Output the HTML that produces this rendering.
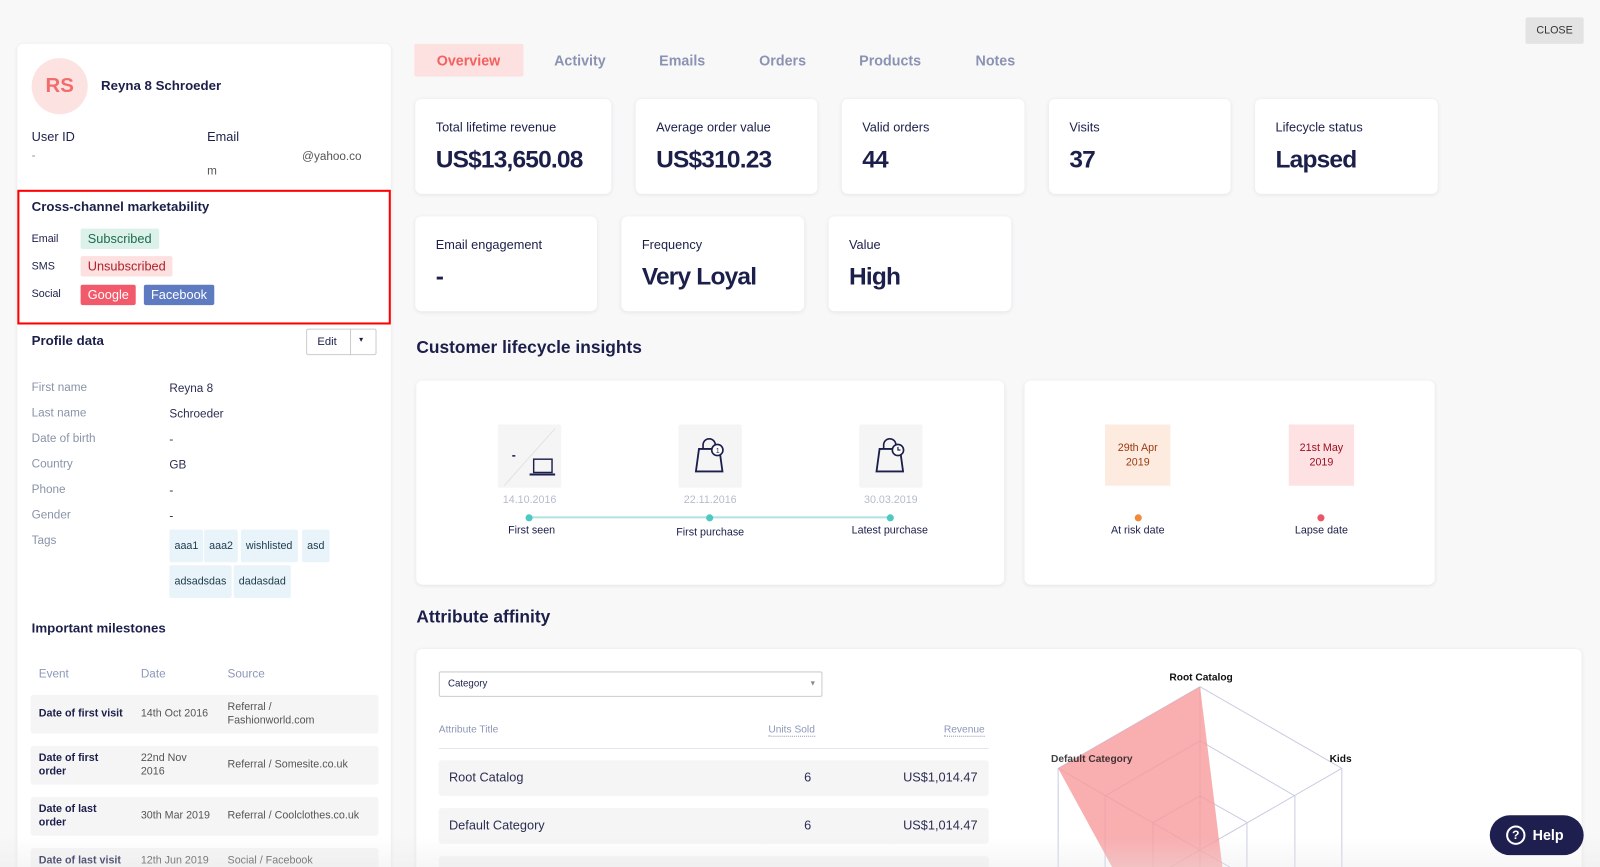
<!DOCTYPE html>
<html><head><meta charset="utf-8"><style>
*{box-sizing:border-box;margin:0;padding:0}
html,body{width:1600px;height:867px;overflow:hidden;background:#f8f8f9;font-family:"Liberation Sans",sans-serif;color:#1b1f4a}
#w{position:absolute;left:0;top:0;width:1568px;height:850px;overflow:hidden;transform:scale(1.0204);transform-origin:0 0}
.a{position:absolute}
.card{position:absolute;background:#fff;border-radius:6px;box-shadow:0 1px 4px rgba(0,0,0,.08)}
.lbl{font-size:12.5px;color:#1b1f4a}
.big{font-size:24px;font-weight:bold;color:#1b1f4a;letter-spacing:-.8px}
.tab{position:absolute;top:43px;height:32px;line-height:32px;font-size:14px;font-weight:bold;color:#8b93b3}
.k{font-size:11.5px;color:#8993a8}
.v{font-size:11.5px;color:#2b2e52}
.tag{position:absolute;height:32px;line-height:32px;padding:0 5px;background:#e9f4fa;border-radius:2px;font-size:10.5px;color:#1b3a4a}
.mrow{position:absolute;left:30px;width:341px;background:#f5f5f6;border-radius:3px;font-size:10.5px}
.pill{position:absolute;height:20px;line-height:20px;padding:0 7px;border-radius:2px;font-size:12.5px}
.sq{position:absolute;width:62px;height:62px;background:#f5f5f6;border-radius:2px}
.dot{position:absolute;width:7px;height:7px;border-radius:50%}
.sm{position:absolute;font-size:10.5px;color:#1b1f4a;text-align:center;width:110px}
.dt{position:absolute;font-size:10.5px;color:#b6bccd;text-align:center;width:110px}
.arow{position:absolute;left:430px;width:539px;height:35px;background:#f5f5f6;border-radius:3px;font-size:12.5px;line-height:35px;color:#2b2e52}
</style></head><body><div id="w">
<div class="a" style="left:1495px;top:17px;width:57px;height:26px;background:#e3e3e3;border-radius:2px;font-size:10.5px;line-height:26px;text-align:center;color:#333">CLOSE</div>

<div class="card" style="left:17px;top:43px;width:366px;height:820px"></div>
<div class="a" style="left:31px;top:57px;width:55px;height:55px;border-radius:50%;background:#fde2e2;color:#f36c6c;font-weight:bold;font-size:20px;line-height:55px;text-align:center">RS</div>
<div class="a" style="left:99px;top:76px;font-size:13px;font-weight:bold">Reyna 8 Schroeder</div>
<div class="a lbl" style="left:31px;top:127px">User ID</div>
<div class="a lbl" style="left:203px;top:127px">Email</div>
<div class="a k" style="left:31px;top:147px">-</div>
<div class="a k" style="left:296px;top:148px;color:#555">@yahoo.co</div>
<div class="a k" style="left:203px;top:162px;color:#555">m</div>
<div class="a" style="left:17px;top:186px;width:366px;height:132px;border:2px solid #f00"></div>
<div class="a" style="left:31px;top:195px;font-size:13px;font-weight:bold">Cross-channel marketability</div>
<div class="a" style="left:31px;top:228px;font-size:10.5px">Email</div>
<div class="a" style="left:31px;top:255px;font-size:10.5px">SMS</div>
<div class="a" style="left:31px;top:282px;font-size:10.5px">Social</div>
<div class="pill" style="left:79px;top:224px;background:#dcf1ea;color:#1d6b4b">Subscribed</div>
<div class="pill" style="left:79px;top:251px;background:#fde0e0;color:#b0202a">Unsubscribed</div>
<div class="pill" style="left:79px;top:279px;background:#f2596b;color:#fff">Google</div>
<div class="pill" style="left:141px;top:279px;background:#5e7ac0;color:#fff">Facebook</div>
<div class="a" style="left:31px;top:326px;font-size:13px;font-weight:bold">Profile data</div>
<div class="a" style="left:300px;top:322px;width:69px;height:26px;border:1px solid #ccc;border-radius:2px;background:#fff"></div>
<div class="a" style="left:343px;top:322px;width:1px;height:26px;background:#ccc"></div>
<div class="a" style="left:311px;top:329px;font-size:11px">Edit</div>
<div class="a" style="left:352px;top:328px;font-size:8px">▾</div>
<div class="a k" style="left:31px;top:374px">First name</div><div class="a v" style="left:166px;top:375px">Reyna 8</div>
<div class="a k" style="left:31px;top:399px">Last name</div><div class="a v" style="left:166px;top:400px">Schroeder</div>
<div class="a k" style="left:31px;top:424px">Date of birth</div><div class="a v" style="left:166px;top:425px">-</div>
<div class="a k" style="left:31px;top:449px">Country</div><div class="a v" style="left:166px;top:450px">GB</div>
<div class="a k" style="left:31px;top:474px">Phone</div><div class="a v" style="left:166px;top:475px">-</div>
<div class="a k" style="left:31px;top:499px">Gender</div><div class="a v" style="left:166px;top:500px">-</div>
<div class="a k" style="left:31px;top:524px">Tags</div>
<div class="tag" style="left:166px;top:519px">aaa1</div>
<div class="tag" style="left:200px;top:519px">aaa2</div>
<div class="tag" style="left:236px;top:519px">wishlisted</div>
<div class="tag" style="left:296px;top:519px">asd</div>
<div class="tag" style="left:166px;top:554px">adsadsdas</div>
<div class="tag" style="left:229px;top:554px">dadasdad</div>
<div class="a" style="left:31px;top:608px;font-size:13px;font-weight:bold">Important milestones</div>
<div class="a" style="left:38px;top:655px;font-size:11.5px;color:#8d97b8">Event</div>
<div class="a" style="left:138px;top:655px;font-size:11.5px;color:#8d97b8">Date</div>
<div class="a" style="left:223px;top:655px;font-size:11.5px;color:#8d97b8">Source</div>
<div class="mrow" style="top:681px;height:38px"><span class="a" style="left:8px;top:12px;font-weight:bold">Date of first visit</span><span class="a" style="left:108px;top:12px;color:#555">14th Oct 2016</span><span class="a" style="left:193px;top:6px;color:#555;line-height:13px">Referral /<br>Fashionworld.com</span></div>
<div class="mrow" style="top:731px;height:38px"><span class="a" style="left:8px;top:6px;font-weight:bold;line-height:13px">Date of first<br>order</span><span class="a" style="left:108px;top:6px;color:#555;line-height:13px">22nd Nov<br>2016</span><span class="a" style="left:193px;top:12px;color:#555">Referral / Somesite.co.uk</span></div>
<div class="mrow" style="top:781px;height:38px"><span class="a" style="left:8px;top:6px;font-weight:bold;line-height:13px">Date of last<br>order</span><span class="a" style="left:108px;top:12px;color:#555">30th Mar 2019</span><span class="a" style="left:193px;top:12px;color:#555">Referral / Coolclothes.co.uk</span></div>
<div class="mrow" style="top:831px;height:38px"><span class="a" style="left:8px;top:6px;font-weight:bold">Date of last visit</span><span class="a" style="left:108px;top:6px;color:#555">12th Jun 2019</span><span class="a" style="left:193px;top:6px;color:#555">Social / Facebook</span></div>

<div class="a" style="left:406px;top:43px;width:107px;height:32px;background:#fde0e0;border-radius:2px"></div>
<div class="tab" style="left:428px;color:#f3605f">Overview</div>
<div class="tab" style="left:543px">Activity</div>
<div class="tab" style="left:646px">Emails</div>
<div class="tab" style="left:744px">Orders</div>
<div class="tab" style="left:842px">Products</div>
<div class="tab" style="left:956px">Notes</div>

<div class="card" style="left:407px;top:97px;width:192px;height:93px"><div class="a lbl" style="left:20px;top:21px">Total lifetime revenue</div><div class="a big" style="left:20px;top:46px">US$13,650.08</div></div>
<div class="card" style="left:623px;top:97px;width:178px;height:93px"><div class="a lbl" style="left:20px;top:21px">Average order value</div><div class="a big" style="left:20px;top:46px">US$310.23</div></div>
<div class="card" style="left:825px;top:97px;width:179px;height:93px"><div class="a lbl" style="left:20px;top:21px">Valid orders</div><div class="a big" style="left:20px;top:46px">44</div></div>
<div class="card" style="left:1028px;top:97px;width:178px;height:93px"><div class="a lbl" style="left:20px;top:21px">Visits</div><div class="a big" style="left:20px;top:46px">37</div></div>
<div class="card" style="left:1230px;top:97px;width:179px;height:93px"><div class="a lbl" style="left:20px;top:21px">Lifecycle status</div><div class="a big" style="left:20px;top:46px">Lapsed</div></div>
<div class="card" style="left:407px;top:212px;width:178px;height:93px"><div class="a lbl" style="left:20px;top:21px">Email engagement</div><div class="a big" style="left:20px;top:46px">-</div></div>
<div class="card" style="left:609px;top:212px;width:179px;height:93px"><div class="a lbl" style="left:20px;top:21px">Frequency</div><div class="a big" style="left:20px;top:46px">Very Loyal</div></div>
<div class="card" style="left:812px;top:212px;width:179px;height:93px"><div class="a lbl" style="left:20px;top:21px">Value</div><div class="a big" style="left:20px;top:46px">High</div></div>

<div class="a" style="left:408px;top:331px;font-size:17px;font-weight:bold">Customer lifecycle insights</div>
<div class="card" style="left:408px;top:373px;width:576px;height:200px"></div>
<div class="card" style="left:1004px;top:373px;width:402px;height:200px"></div>
<div class="sq" style="left:488px;top:416px"><svg width="62" height="62"><line x1="6" y1="60" x2="56" y2="4" stroke="#e3e3e3"/><rect x="14" y="30" width="3" height="1.5" fill="#1b1f4a"/><rect x="35" y="34" width="18" height="13" fill="none" stroke="#1b1f4a" stroke-width="1.4"/><rect x="31" y="48" width="25" height="2" fill="#1b1f4a"/></svg></div>
<div class="sq" style="left:665px;top:416px"><svg width="62" height="62"><path d="M20 24 h20 l3 22 h-26z" fill="none" stroke="#1b1f4a" stroke-width="1.8"/><path d="M24 24 v-4 a6 6 0 0 1 12 0 v4" fill="none" stroke="#1b1f4a" stroke-width="1.6"/><circle cx="38" cy="25" r="5.5" fill="#fff" stroke="#1b1f4a" stroke-width="1.6"/><text x="36.5" y="28" font-size="7" fill="#1b1f4a" font-family="Liberation Sans">1</text></svg></div>
<div class="sq" style="left:842px;top:416px"><svg width="62" height="62"><path d="M20 24 h20 l3 22 h-26z" fill="none" stroke="#1b1f4a" stroke-width="1.8"/><path d="M24 24 v-4 a6 6 0 0 1 12 0 v4" fill="none" stroke="#1b1f4a" stroke-width="1.6"/><circle cx="38" cy="25" r="5.5" fill="#fff" stroke="#1b1f4a" stroke-width="1.6"/><path d="M38 22 v3 h2.5" stroke="#1b1f4a" fill="none" stroke-width="1.2"/></svg></div>
<div class="dt" style="left:464px;top:484px">14.10.2016</div>
<div class="dt" style="left:641px;top:484px">22.11.2016</div>
<div class="dt" style="left:818px;top:484px">30.03.2019</div>
<div class="a" style="left:519px;top:506px;width:354px;height:2px;background:#b2e3df"></div>
<div class="dot" style="left:515px;top:504px;background:#4ec9c1"></div>
<div class="dot" style="left:692px;top:504px;background:#4ec9c1"></div>
<div class="dot" style="left:869px;top:504px;background:#4ec9c1"></div>
<div class="sm" style="left:466px;top:514px">First seen</div>
<div class="sm" style="left:641px;top:516px">First purchase</div>
<div class="sm" style="left:817px;top:514px">Latest purchase</div>
<div class="a" style="left:1083px;top:416px;width:64px;height:60px;background:#fdebe0;font-size:10.5px;color:#9a3a10;text-align:center;padding-top:16px;line-height:14px">29th Apr<br>2019</div>
<div class="a" style="left:1263px;top:416px;width:64px;height:60px;background:#fde1e3;font-size:10.5px;color:#9a1020;text-align:center;padding-top:16px;line-height:14px">21st May<br>2019</div>
<div class="dot" style="left:1112px;top:504px;background:#f38a3a"></div>
<div class="dot" style="left:1291px;top:504px;background:#ec5468"></div>
<div class="sm" style="left:1060px;top:514px">At risk date</div>
<div class="sm" style="left:1240px;top:514px">Lapse date</div>

<div class="a" style="left:408px;top:595px;font-size:17px;font-weight:bold">Attribute affinity</div>
<div class="card" style="left:408px;top:636px;width:1142px;height:240px"></div>
<div class="a" style="left:430px;top:658px;width:376px;height:25px;border:1px solid #ccc;border-radius:2px;font-size:9.5px;line-height:24px;padding-left:8px">Category<span class="a" style="right:5px;top:0;font-size:7px;color:#888">▼</span></div>
<div class="a" style="left:430px;top:710px;font-size:10px;color:#8d97b8">Attribute Title</div>
<div class="a" style="left:753px;top:710px;font-size:10px;color:#8d97b8;border-bottom:1px dotted #8d97b8">Units Sold</div>
<div class="a" style="left:925px;top:710px;font-size:10px;color:#8d97b8;border-bottom:1px dotted #8d97b8">Revenue</div>
<div class="a" style="left:430px;top:733px;width:539px;height:1px;background:#e4e6f0"></div>
<div class="arow" style="top:745px"><span class="a" style="left:10px">Root Catalog</span><span class="a" style="left:358px">6</span><span class="a" style="right:11px">US$1,014.47</span></div>
<div class="arow" style="top:792px"><span class="a" style="left:10px">Default Category</span><span class="a" style="left:358px">6</span><span class="a" style="right:11px">US$1,014.47</span></div>
<div class="arow" style="top:839px"></div>

<svg class="a" style="left:0;top:0" width="1568" height="850">
<g fill="none" stroke="#c9cde0" stroke-width="1">
<polygon points="1176,673 1315,753 1315,913 1176,993 1037,913 1037,753"/>
<polygon points="1176,726 1269,780 1269,887 1176,940 1083,887 1083,780"/>
<polygon points="1176,780 1222,806 1222,860 1176,886 1130,860 1130,806"/>
<line x1="1176" y1="673" x2="1176" y2="993"/><line x1="1037" y1="753" x2="1315" y2="913"/><line x1="1315" y1="753" x2="1037" y2="913"/>
</g>
<polygon points="1176,673 1037,753 1090,850 1120,880 1198,850" fill="#f79a9c" fill-opacity=".8"/>
<text x="1146" y="667" font-size="10" font-weight="bold" font-family="Liberation Sans" fill="#111">Root Catalog</text>
<text x="1030" y="747" font-size="10" font-weight="bold" font-family="Liberation Sans" fill="#111" fill-opacity=".8">Default Category</text>
<text x="1303" y="747" font-size="10" font-weight="bold" font-family="Liberation Sans" fill="#111">Kids</text>
</svg>
<div class="a" style="left:0;top:820px;width:1568px;height:30px;background:linear-gradient(rgba(240,240,240,0),rgba(230,230,230,.35))"></div>
<div class="a" style="left:1460px;top:799px;width:92px;height:39px;border-radius:20px;background:#1e1f4f;color:#fff;font-weight:bold;font-size:14px;line-height:39px;padding-left:42px">Help</div>
<div class="a" style="left:1476px;top:809px;width:19px;height:19px;border:2px solid #fff;border-radius:50%;color:#fff;font-size:12px;font-weight:bold;text-align:center;line-height:15px">?</div>
</div></body></html>
